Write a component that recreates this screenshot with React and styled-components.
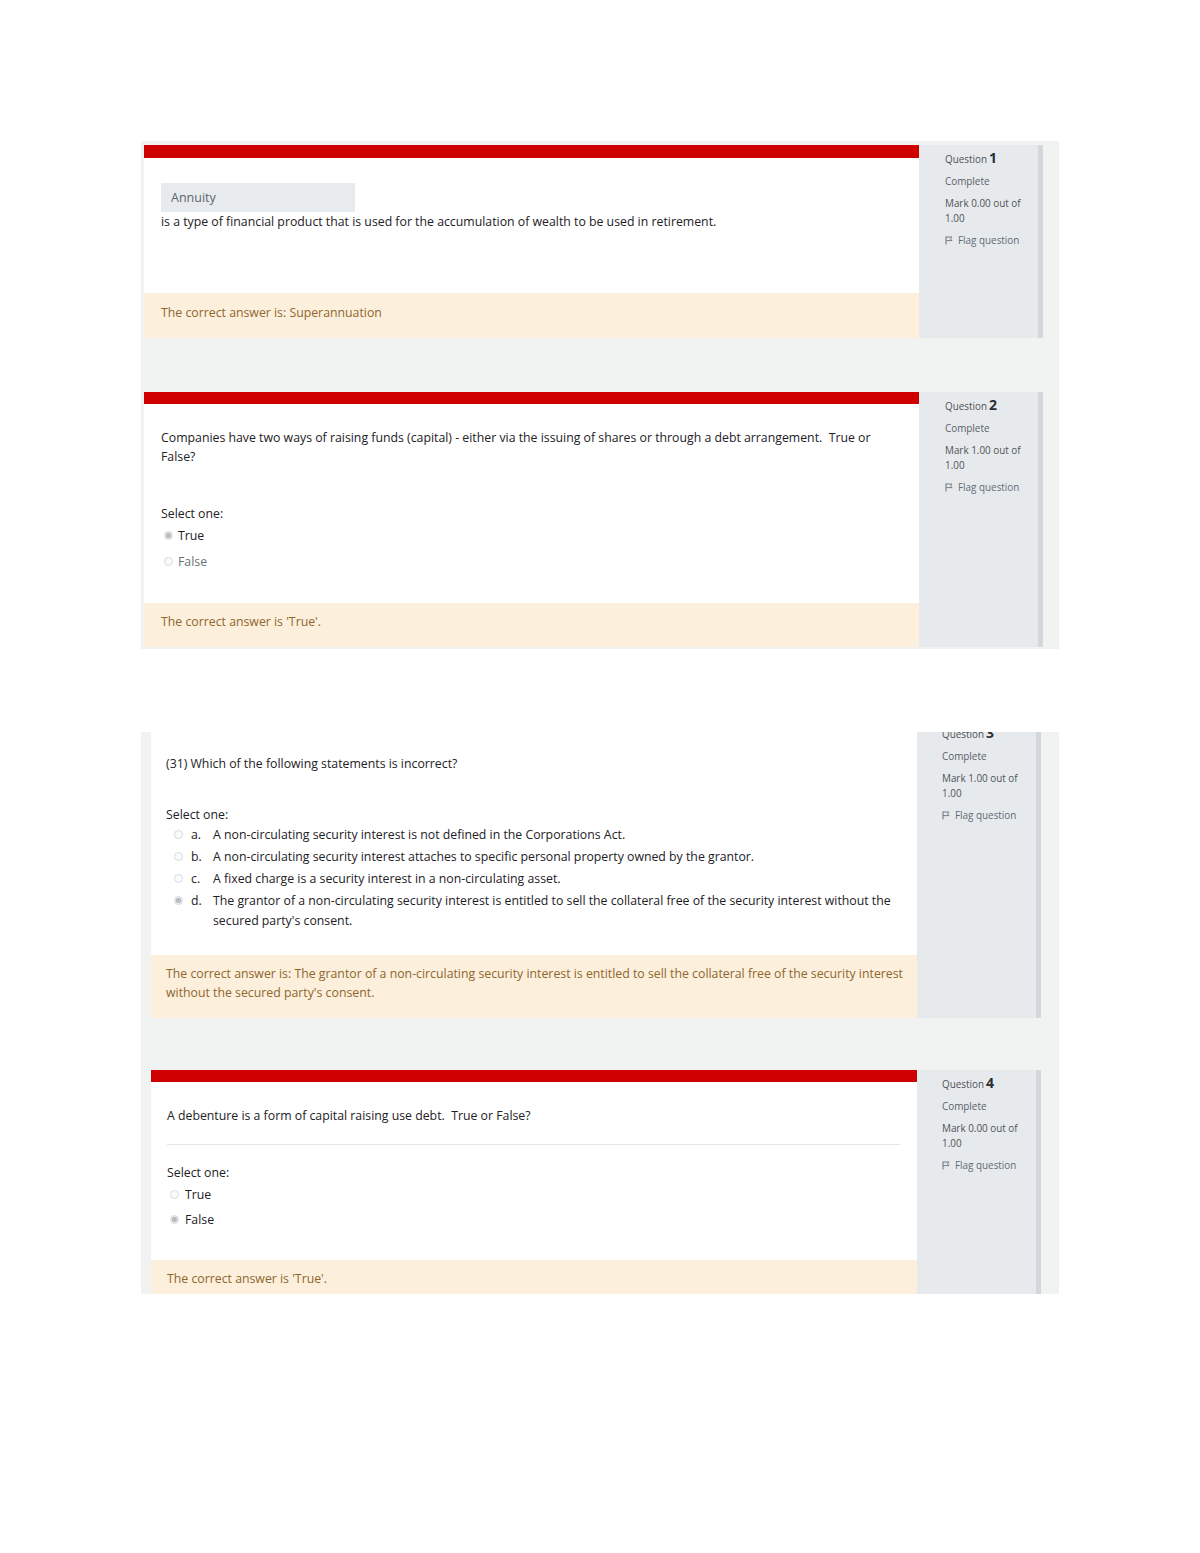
import React from 'react'
import styled, { createGlobalStyle } from 'styled-components'

const GlobalStyle = createGlobalStyle`
  html, body {
    margin: 0;
    padding: 0;
    background: #ffffff;
  }
  body {
    font-family: "Open Sans", "Liberation Sans", sans-serif;
    color: #1d2125;
  }
`

const Page = styled.div`
  min-height: 1553px;
  padding: 141px 0 0 141px;
  box-sizing: border-box;
`

const Shot = styled.div`
  width: 918px;
  box-sizing: border-box;
  background: #f1f2f2;
  padding: ${p => p.$pad};
  margin-top: ${p => p.$top || 0};
  height: ${p => p.$height || 'auto'};
  overflow: hidden;
  display: flex;
  flex-direction: column;
  gap: ${p => p.$gap};
`

const Row = styled.div`
  display: flex;
  align-items: stretch;
`

const Main = styled.div`
  flex: 1;
  min-width: 0;
  background: #ffffff;
  display: flex;
  flex-direction: column;
`

const Bar = styled.div`
  height: ${p => p.$h}px;
  background: #ce0000;
`

const Formulation = styled.div`
  padding: ${p => p.$pad};
  font-size: 12.3px;
  line-height: 19px;
`

const Tag = styled.div`
  width: 194px;
  height: 29px;
  box-sizing: border-box;
  background: #e8ebee;
  color: #5b6570;
  padding-left: 10px;
  line-height: 30px;
  font-size: 12.5px;
`

const QText = styled.div`
  color: #1d2125;
`

const Rule = styled.div`
  border-top: 1px solid #e3e6e9;
  margin: 19px 0 18px;
`

const Prompt = styled.div`
  margin-top: ${p => p.$mt || 0};
  color: #1d2125;
`

const Option = styled.div`
  display: flex;
  align-items: flex-start;
  padding: ${p => p.$pad || 0};
  line-height: ${p => p.$lh};
  color: ${p => p.$muted ? '#6b737a' : '#1d2125'};
  margin-left: ${p => p.$indent || '3px'};
`

const Radio = styled.span`
  flex: none;
  width: 9px;
  height: 9px;
  margin-top: ${p => p.$mt};
  margin-right: ${p => p.$mr || '5px'};
  border-radius: 50%;
  box-sizing: border-box;
  border: 1px solid #d6d9dc;
  background: ${p => p.$on ? 'radial-gradient(circle, #b9bdc1 0 2.5px, #eceeef 3px)' : '#fbfbfb'};
`

const Letter = styled.span`
  flex: none;
  width: 22px;
  padding-left: 4px;
`

const Answer = styled.div`
  background: #fcefdc;
  color: #8e662e;
  font-size: 12.3px;
  line-height: 19px;
  padding: ${p => p.$pad || '9px 17px 16px'};
`

const Info = styled.div`
  flex: none;
  width: 124px;
  box-sizing: border-box;
  background: #e7eaed;
  border-right: 5px solid #d3d7dc;
  padding: 5px 6px 0 ${p => p.$left || '26px'};
  overflow: hidden;
  font-size: 9.9px;
  line-height: 15px;
  color: #4d5257;
`

const InfoItem = styled.div`
  margin-top: ${p => p.$mt || '7px'};
  color: ${p => p.$color || '#4d5257'};
  white-space: nowrap;
`

const QNo = styled.span`
  font-size: 14px;
  font-weight: 700;
  color: #2b2f33;
  margin-left: 2px;
`

const FlagIcon = () => (
  <svg width="8" height="9" viewBox="0 0 8 9" style={{ marginRight: 5, verticalAlign: '-1px' }}>
    <path d="M1 0.5 V8.5" stroke="#6b737a" strokeWidth="1" />
    <path d="M1 1 H7 L5.5 2.8 L7 4.6 H1" fill="none" stroke="#6b737a" strokeWidth="0.9" />
  </svg>
)

const InfoPanel = ({ n, mark, left, headTop }) => (
  <Info $left={left}>
    <InfoItem $mt={headTop || '0'}>
      Question<QNo>{n}</QNo>
    </InfoItem>
    <InfoItem $color="#5a6168">Complete</InfoItem>
    <InfoItem>
      Mark {mark} out of
      <br />
      1.00
    </InfoItem>
    <InfoItem $color="#5f6a75">
      <FlagIcon />
      Flag question
    </InfoItem>
  </Info>
)

const multi = [
  { l: 'a.', t: 'A non-circulating security interest is not defined in the Corporations Act.' },
  { l: 'b.', t: 'A non-circulating security interest attaches to specific personal property owned by the grantor.' },
  { l: 'c.', t: 'A fixed charge is a security interest in a non-circulating asset.' },
  {
    l: 'd.',
    t: "The grantor of a non-circulating security interest is entitled to sell the collateral free of the security interest without the secured party's consent.",
    on: true,
  },
]

const App = () => (
  <Page>
    <GlobalStyle />
    <Shot $pad="4px 16px 2px 3px" $gap="54px">
      <Row>
        <Main>
          <Bar $h={13} />
          <Formulation $pad="25px 17px 62px">
            <Tag>Annuity</Tag>
            <QText>
              is a type of financial product that is used for the accumulation of wealth to be used in retirement.
            </QText>
          </Formulation>
          <Answer $pad="10px 17px 16px">The correct answer is: Superannuation</Answer>
        </Main>
        <InfoPanel n="1" mark="0.00" />
      </Row>
      <Row>
        <Main>
          <Bar $h={12} />
          <Formulation $pad="24px 17px 28px">
            <QText>
              Companies have two ways of raising funds (capital) - either via the issuing of shares or through a debt
              arrangement.{'\u00a0'} True or False?
            </QText>
            <Prompt $mt="38px">Select one:</Prompt>
            <Option $lh="26px" $indent="3px">
              <Radio $on $mt="8px" />
              True
            </Option>
            <Option $lh="26px" $indent="3px" $muted>
              <Radio $mt="8px" />
              False
            </Option>
          </Formulation>
          <Answer>The correct answer is 'True'.</Answer>
        </Main>
        <InfoPanel n="2" mark="1.00" />
      </Row>
    </Shot>

    <Shot $pad="0 18px 0 10px" $gap="52px" $top="83px" $height="562px">
      <Row>
        <Main>
          <Formulation $pad="22px 17px 23px 15px">
            <QText>(31) Which of the following statements is incorrect?</QText>
            <Prompt $mt="32px">Select one:</Prompt>
            {multi.map(o => (
              <Option key={o.l} $lh="20px" $pad="1px 0" $indent="8px">
                <Radio $on={o.on} $mt="5px" $mr="4px" />
                <Letter>{o.l}</Letter>
                <span>{o.t}</span>
              </Option>
            ))}
          </Formulation>
          <Answer $pad="9px 8px 16px 15px">
            The correct answer is: The grantor of a non-circulating security interest is entitled to sell the collateral
            free of the security interest without the secured party's consent.
          </Answer>
        </Main>
        <InfoPanel n="3" mark="1.00" left="25px" headTop="-12px" />
      </Row>
      <Row>
        <Main>
          <Bar $h={12} />
          <Formulation $pad="24px 17px 28px 16px">
            <QText>
              A debenture is a form of capital raising use debt.{'\u00a0'} True or False?
            </QText>
            <Rule />
            <Prompt>Select one:</Prompt>
            <Option $lh="25px" $indent="3px">
              <Radio $mt="8px" $mr="6px" />
              True
            </Option>
            <Option $lh="25px" $indent="3px">
              <Radio $on $mt="8px" $mr="6px" />
              False
            </Option>
          </Formulation>
          <Answer $pad="9px 17px 16px 16px">The correct answer is 'True'.</Answer>
        </Main>
        <InfoPanel n="4" mark="0.00" left="25px" />
      </Row>
    </Shot>
  </Page>
)

export default App
